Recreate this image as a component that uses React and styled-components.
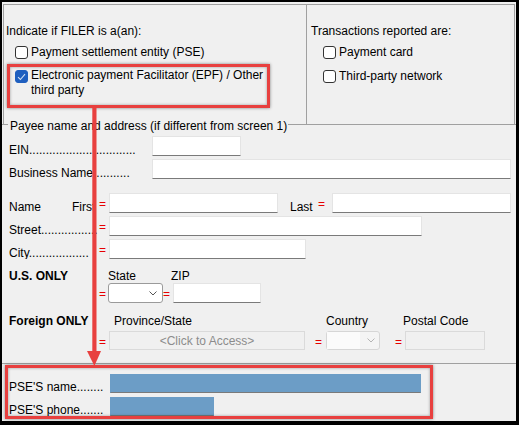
import React from "react";
import styled, { createGlobalStyle } from "styled-components";

const GlobalStyle = createGlobalStyle`
  html, body { margin: 0; padding: 0; background: #f0f0f0; }
  body {
    font-family: "Liberation Sans", Arial, sans-serif;
    font-size: 12px;
    color: #000;
  }
`;

const Window = styled.div`
  position: relative;
  box-sizing: border-box;
  width: 519px;
  height: 425px;
  border-style: solid;
  border-color: #000;
  border-width: 2px 3px 4px 2px;
  background: #f0f0f0;
  display: flex;
  flex-direction: column;
  overflow: hidden;
`;

const TopGroup = styled.div`
  box-sizing: border-box;
  height: 120px;
  margin: 2px 1px 0 1px;
  border: 1px solid #a0a0a0;
  border-bottom: none;
  display: grid;
  grid-template-columns: 302px 1fr;
`;

const Column = styled.div`
  display: flex;
  flex-direction: column;
  padding: 18px 0 0 ${(p) => p.$pad}px;
  border-left: ${(p) => (p.$divider ? "1px solid #a0a0a0" : "none")};
`;

const Heading = styled.div`
  line-height: 16px;
  white-space: nowrap;
`;

const CheckRow = styled.label`
  display: flex;
  align-items: flex-start;
  gap: 3px;
  margin-top: ${(p) => p.$mt}px;
  margin-left: ${(p) => p.$indent}px;
`;

const Box = styled.span`
  flex: none;
  box-sizing: border-box;
  width: 13px;
  height: 13px;
  margin-top: 2px;
  border: 1px solid ${(p) => (p.$checked ? "#1f5fbf" : "#333")};
  border-radius: 3px;
  background: ${(p) => (p.$checked ? "#1f5fbf" : "#fff")};
  display: flex;
  align-items: center;
  justify-content: center;
`;

const CheckText = styled.span`
  line-height: ${(p) => p.$lh || 16}px;
  white-space: nowrap;
`;

const LegendRow = styled.div`
  display: flex;
  align-items: center;
  height: 1px;
`;

const Rule = styled.span`
  height: 1px;
  background: #a0a0a0;
  flex: ${(p) => (p.$grow ? "1" : "none")};
  width: ${(p) => (p.$w ? `${p.$w}px` : "auto")};
`;

const LegendText = styled.span`
  line-height: 14px;
  padding: 2px 1px 0 2px;
  white-space: nowrap;
`;

const Form = styled.div`
  display: flex;
  flex-direction: column;
  padding-left: 7px;
`;

const Row = styled.div`
  display: flex;
  align-items: stretch;
  height: ${(p) => p.$h || 20}px;
  margin-top: ${(p) => p.$mt || 0}px;
`;

const HeaderRow = styled.div`
  display: flex;
  line-height: 14px;
  margin-top: ${(p) => p.$mt || 0}px;
  white-space: nowrap;
`;

const Label = styled.span`
  flex: none;
  width: ${(p) => p.$w}px;
  line-height: 12px;
  align-self: flex-end;
  white-space: nowrap;
  overflow: hidden;
`;

const HeadCell = styled.span`
  flex: none;
  width: ${(p) => (p.$w ? `${p.$w}px` : "auto")};
  font-weight: ${(p) => (p.$bold ? 700 : 400)};
`;

const Eq = styled.span`
  flex: none;
  width: ${(p) => p.$w}px;
  margin-left: ${(p) => p.$ml || 0}px;
  color: #e60000;
  line-height: 22px;
  align-self: flex-start;
`;

const Spacer = styled.span`
  flex: none;
  width: ${(p) => p.$w}px;
`;

const TextBox = styled.input`
  flex: none;
  box-sizing: border-box;
  width: ${(p) => p.$w}px;
  height: 100%;
  margin: 0;
  padding: 0 3px;
  font: inherit;
  background: ${(p) => (p.$fill ? "#6c9dc6" : "#fff")};
  border: 1px solid ${(p) => (p.$fill ? "#6c9dc6" : "#e4e4e4")};
  border-bottom-color: #7a7a7a;
  border-radius: 0;
  outline: none;
`;

const DisabledBox = styled.div`
  flex: none;
  box-sizing: border-box;
  width: ${(p) => p.$w}px;
  height: 100%;
  border: 1px solid #dadada;
  background: #f0f0f0;
  color: #8c8c8c;
  display: flex;
  align-items: center;
  justify-content: center;
  white-space: nowrap;
`;

const SelectBox = styled.div`
  flex: none;
  box-sizing: border-box;
  width: ${(p) => p.$w}px;
  height: 100%;
  border: 1px solid ${(p) => (p.$disabled ? "#d6d6d6" : "#9a9a9a")};
  border-radius: 3px;
  background: ${(p) => (p.$disabled ? "#f4f4f4" : "#fff")};
  display: flex;
  align-items: center;
  justify-content: space-between;
  padding-right: ${(p) => (p.$disabled ? 4 : 5)}px;
`;

const SelectEdit = styled.span`
  align-self: stretch;
  width: ${(p) => p.$w}px;
  background: ${(p) => (p.$disabled ? "#fbfbfb" : "transparent")};
`;

const Divider = styled.div`
  height: 1px;
  background: #a0a0a0;
  margin-top: ${(p) => p.$mt}px;
`;

const RedBox = styled.div`
  position: absolute;
  box-sizing: border-box;
  left: ${(p) => p.$x}px;
  top: ${(p) => p.$y}px;
  width: ${(p) => p.$w}px;
  height: ${(p) => p.$h}px;
  border: 3px solid #e8403f;
  box-shadow: 0 0 3px rgba(0, 0, 0, 0.45), inset 0 0 3px rgba(0, 0, 0, 0.35);
  pointer-events: none;
`;

const ArrowSvg = styled.svg`
  position: absolute;
  left: 82px;
  top: 103px;
  overflow: visible;
`;

const Chevron = ({ color = "#555" }) => (
  <svg width="8" height="5" viewBox="0 0 8 5">
    <polyline points="0.5,0.5 4,4 7.5,0.5" fill="none" stroke={color} strokeWidth="1" />
  </svg>
);

const Check = ({ checked }) => (
  <Box $checked={checked}>
    {checked && (
      <svg width="9" height="8" viewBox="0 0 9 8">
        <polyline points="1,4.2 3.4,6.5 8,1.2" fill="none" stroke="#cfe0f5" strokeWidth="1.1" />
      </svg>
    )}
  </Box>
);

export default function App() {
  return (
    <>
      <GlobalStyle />
      <Window>
        <TopGroup>
          <Column $pad={2}>
            <Heading>Indicate if FILER is a(an):</Heading>
            <CheckRow $mt={5} $indent={9}>
              <Check />
              <CheckText>Payment settlement entity (PSE)</CheckText>
            </CheckRow>
            <CheckRow $mt={8} $indent={9}>
              <Check checked />
              <CheckText $lh={14.5}>
                Electronic payment Facilitator (EPF) / Other
                <br />
                third party
              </CheckText>
            </CheckRow>
          </Column>
          <Column $pad={4} $divider>
            <Heading>Transactions reported are:</Heading>
            <CheckRow $mt={5} $indent={12}>
              <Check />
              <CheckText>Payment card</CheckText>
            </CheckRow>
            <CheckRow $mt={8} $indent={12}>
              <Check />
              <CheckText>Third-party network</CheckText>
            </CheckRow>
          </Column>
        </TopGroup>

        <LegendRow>
          <Rule $w={6} />
          <LegendText>Payee name and address (if different from screen 1)</LegendText>
          <Rule $grow />
        </LegendRow>

        <Form>
          <Row $mt={11}>
            <Label $w={143}>EIN................................</Label>
            <TextBox $w={89} readOnly />
          </Row>
          <Row $mt={3}>
            <Label $w={143}>Business Name...........</Label>
            <TextBox $w={359} readOnly />
          </Row>
          <Row $mt={14}>
            <Label $w={63}>Name</Label>
            <Label $w={27}>First</Label>
            <Eq $w={10}>=</Eq>
            <TextBox $w={169} readOnly />
            <Spacer $w={12} />
            <Label $w={28}>Last</Label>
            <Eq $w={14}>=</Eq>
            <TextBox $w={179} readOnly />
          </Row>
          <Row $mt={3}>
            <Label $w={90}>Street.................</Label>
            <Eq $w={10}>=</Eq>
            <TextBox $w={313} readOnly />
          </Row>
          <Row $mt={3}>
            <Label $w={90}>City..................</Label>
            <Eq $w={10}>=</Eq>
            <TextBox $w={197} readOnly />
          </Row>
          <HeaderRow $mt={10}>
            <HeadCell $w={99} $bold>U.S. ONLY</HeadCell>
            <HeadCell $w={63}>State</HeadCell>
            <HeadCell>ZIP</HeadCell>
          </HeaderRow>
          <Row>
            <Spacer $w={90} />
            <Eq $w={9}>=</Eq>
            <SelectBox $w={55}>
              <SelectEdit $w={30} />
              <Chevron />
            </SelectBox>
            <Eq $w={10}>=</Eq>
            <TextBox $w={88} readOnly />
          </Row>
          <HeaderRow $mt={11}>
            <HeadCell $w={105} $bold>Foreign ONLY</HeadCell>
            <HeadCell $w={212}>Province/State</HeadCell>
            <HeadCell $w={77}>Country</HeadCell>
            <HeadCell>Postal Code</HeadCell>
          </HeaderRow>
          <Row $mt={3} $h={19}>
            <Spacer $w={90} />
            <Eq $w={10}>=</Eq>
            <DisabledBox $w={196}>&lt;Click to Access&gt;</DisabledBox>
            <Eq $w={11} $ml={10}>=</Eq>
            <SelectBox $w={54} $disabled>
              <SelectEdit $w={33} $disabled />
              <Chevron color="#b4b4b4" />
            </SelectBox>
            <Eq $w={10} $ml={15}>=</Eq>
            <DisabledBox $w={80} />
          </Row>
        </Form>

        <Divider $mt={13} />

        <Form>
          <Row $mt={10} $h={19}>
            <Label $w={101}>PSE'S name........</Label>
            <TextBox $w={311} $fill readOnly />
          </Row>
          <Row $mt={4} $h={19}>
            <Label $w={101}>PSE'S phone.......</Label>
            <TextBox $w={104} $fill readOnly />
          </Row>
        </Form>

        <RedBox $x={5} $y={62} $w={263} $h={44} />
        <RedBox $x={3} $y={363} $w={428} $h={54} />
        <ArrowSvg width="18" height="262" viewBox="0 0 18 262">
          <rect x="8.3" y="2" width="4.2" height="246" fill="#e8403f" />
          <polygon points="3,246 17,246 10.4,261" fill="#e8403f" />
        </ArrowSvg>
      </Window>
    </>
  );
}
